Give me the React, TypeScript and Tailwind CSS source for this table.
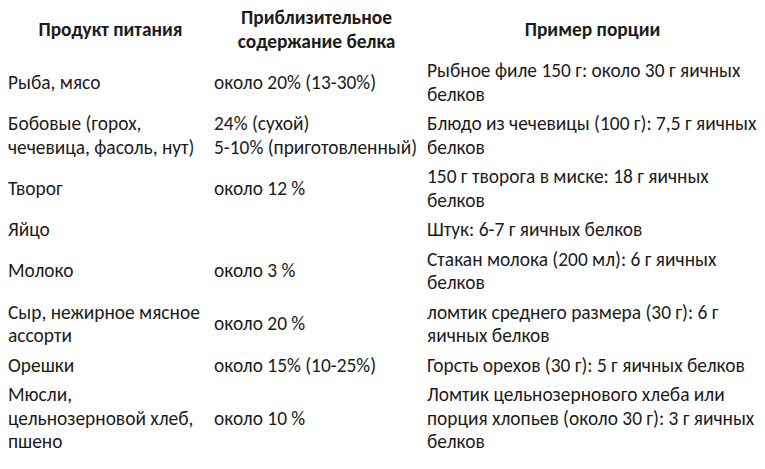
import React from "react";

type Row = { product: string[]; protein: string[]; portion: string[] };

const rows: Row[] = [
  { product: ["Рыба, мясо"], protein: ["около 20% (13-30%)"], portion: ["Рыбное филе 150 г: около 30 г яичных", "белков"] },
  { product: ["Бобовые (горох,", "чечевица, фасоль, нут)"], protein: ["24% (сухой)", "5-10% (приготовленный)"], portion: ["Блюдо из чечевицы (100 г): 7,5 г яичных", "белков"] },
  { product: ["Творог"], protein: ["около 12 %"], portion: ["150 г творога в миске: 18 г яичных", "белков"] },
  { product: ["Яйцо"], protein: [], portion: ["Штук: 6-7 г яичных белков"] },
  { product: ["Молоко"], protein: ["около 3 %"], portion: ["Стакан молока (200 мл): 6 г яичных", "белков"] },
  { product: ["Сыр, нежирное мясное", "ассорти"], protein: ["около 20 %"], portion: ["ломтик среднего размера (30 г): 6 г", "яичных белков"] },
  { product: ["Орешки"], protein: ["около 15% (10-25%)"], portion: ["Горсть орехов (30 г): 5 г яичных белков"] },
  { product: ["Мюсли,", "цельнозерновой хлеб,", "пшено"], protein: ["около 10 %"], portion: ["Ломтик цельнозернового хлеба или", "порция хлопьев (около 30 г): 3 г яичных", "белков"] },
];

function Lines({ lines }: { lines: string[] }) {
  return (
    <div>
      {lines.map((l, i) => (
        <div key={i} className="whitespace-nowrap">{l}</div>
      ))}
    </div>
  );
}

export default function App() {
  return (
    <div
      className="w-[765px] h-[469px] bg-white text-[#1b1b1b] text-[19.4px] leading-[23.5px] overflow-hidden"
      style={{ fontFamily: "Carlito, Calibri, Lato, sans-serif" }}
    >
      <div className="grid grid-cols-[207px_213px_345px] pt-[6px]">
        {/* Header */}
        <div className="flex items-center justify-center pl-[14px] pb-[2px] font-bold">Продукт питания</div>
        <div className="flex flex-col items-center font-bold leading-[24px] pl-[6px] pb-[2px]">
          <div>Приблизительное</div>
          <div>содержание белка</div>
        </div>
        <div className="flex items-center justify-center pb-[2px] font-bold">Пример порции</div>

        {rows.map((r, i) => (
          <React.Fragment key={i}>
            <div className="flex items-center pl-[8px] py-[3px]">
              <Lines lines={r.product} />
            </div>
            <div className="flex items-center pl-[7px] py-[3px]">
              <Lines lines={r.protein} />
            </div>
            <div className="flex items-center pl-[7px] py-[3px]">
              <Lines lines={r.portion} />
            </div>
          </React.Fragment>
        ))}
      </div>
    </div>
  );
}
